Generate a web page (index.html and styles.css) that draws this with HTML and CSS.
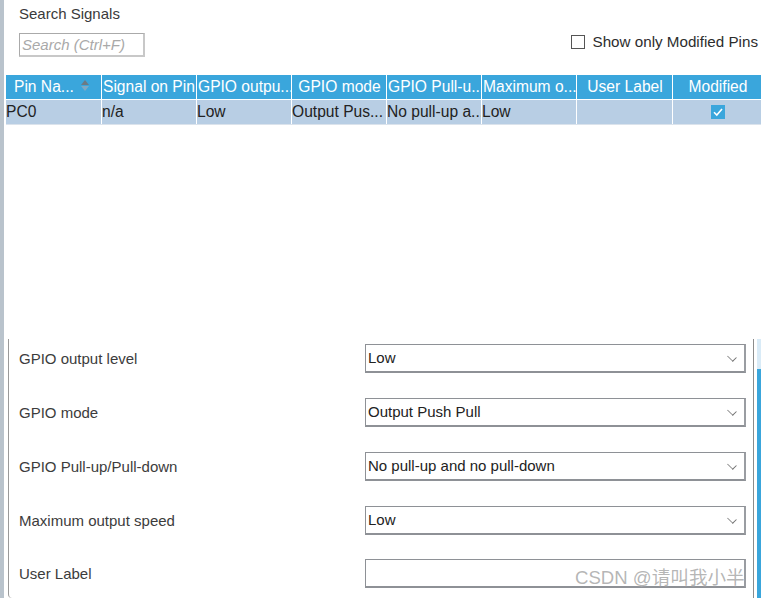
FILE: index.html
```html
<!DOCTYPE html>
<html lang="en">
<head>
    <meta charset="UTF-8">
    <meta name="viewport" content="width=device-width, initial-scale=1.0">
    <title>Pin Configuration</title>
    <link rel="stylesheet" href="styles.css">
</head>
<body>
    <div id="app">
        <div class="edge"></div>
        <div class="main">
            <div class="search-bar">
                <div class="search-left">
                    <div class="search-title">Search Signals</div>
                    <div class="search-box">Search (Ctrl+F)</div>
                </div>
                <label class="only-modified">
                    <span class="box"></span>
                    Show only Modified Pins
                </label>
            </div>

            <div class="grid header">
                <div class="hcell sortable">Pin Na...
                    <span class="sort"><span class="up"></span><span class="down"></span></span>
                </div>
                <div class="hcell">Signal on Pin</div>
                <div class="hcell">GPIO outpu...</div>
                <div class="hcell center">GPIO mode</div>
                <div class="hcell">GPIO Pull-u...</div>
                <div class="hcell">Maximum o...</div>
                <div class="hcell center">User Label</div>
                <div class="hcell center">Modified</div>
            </div>
            <div class="grid row">
                <div class="cell">PC0</div>
                <div class="cell">n/a</div>
                <div class="cell">Low</div>
                <div class="cell">Output Pus...</div>
                <div class="cell">No pull-up a...</div>
                <div class="cell">Low</div>
                <div class="cell"></div>
                <div class="cell center">
                    <span class="checked">
                        <svg width="14" height="14" viewBox="0 0 14 14"><path d="M3 7.2 L5.8 10 L11 4" fill="none" stroke="#fff" stroke-width="1.6"/></svg>
                    </span>
                </div>
            </div>

            <div class="panel-wrap">
                <div class="panel">
                    <div class="prop">
                        <div class="prop-name">GPIO output level</div>
                        <div class="select">Low<span class="chev"></span></div>
                    </div>
                    <div class="prop">
                        <div class="prop-name">GPIO mode</div>
                        <div class="select">Output Push Pull<span class="chev"></span></div>
                    </div>
                    <div class="prop">
                        <div class="prop-name">GPIO Pull-up/Pull-down</div>
                        <div class="select">No pull-up and no pull-down<span class="chev"></span></div>
                    </div>
                    <div class="prop">
                        <div class="prop-name">Maximum output speed</div>
                        <div class="select">Low<span class="chev"></span></div>
                    </div>
                    <div class="prop last">
                        <div class="prop-name">User Label</div>
                        <div class="select"></div>
                    </div>
                </div>
                <div class="vline"></div>
                <div class="scroll"><div class="thumb"></div></div>
            </div>
        </div>
    </div>
    <div class="watermark">CSDN @请叫我小半</div>
</body>
</html>
```

FILE: styles.css
```css
body {
    margin: 0;
    width: 761px;
    height: 598px;
    overflow: hidden;
    background-color: #fff;
    font-family: "Liberation Sans", Arial, sans-serif;
    font-size: 15px;
    color: #333;
    position: relative;
}

#app {
    display: flex;
    height: 598px;
}

.edge {
    width: 4px;
    flex: none;
    background-color: #b9c3cc;
}

.main {
    flex: 1;
    display: flex;
    flex-direction: column;
    padding-left: 2px;
}

/* search area */
.search-bar {
    height: 75px;
    display: flex;
    justify-content: space-between;
}

.search-left {
    padding-left: 13px;
}

.search-title {
    margin-top: 5px;
    line-height: 17px;
    color: #3a3a3a;
}

.search-box {
    margin-top: 11px;
    width: 121px;
    height: 21px;
    border-style: solid;
    border-width: 1px 2px 2px 1px;
    border-color: #aaa #c8c8c8 #c8c8c8 #aaa;
    padding-left: 2px;
    line-height: 21px;
    font-style: italic;
    color: #a9a9a9;
}

.only-modified {
    margin-top: 33px;
    display: flex;
    align-items: flex-start;
    gap: 8px;
    font-size: 15.2px;
    line-height: 18px;
    color: #2d2d2d;
    white-space: nowrap;
    margin-right: 4px;
}

.only-modified .box {
    width: 12px;
    height: 12px;
    margin-top: 2px;
    border: 1px solid #555;
    background-color: #fff;
}

/* table */
.grid {
    display: grid;
    grid-template-columns: 95px 94px 94px 94px 94px 94px 95px 1fr;
    column-gap: 1px;
    background-color: #fff;
}

.header {
    height: 24px;
}

.hcell {
    background-color: #3aa6dc;
    color: #fff;
    font-size: 15.6px;
    line-height: 24px;
    white-space: nowrap;
    overflow: hidden;
    padding-left: 1px;
}

.hcell.sortable {
    padding-left: 8px;
    position: relative;
}

.center {
    text-align: center;
}

.sort {
    position: absolute;
    left: 75px;
    top: 5px;
}

.sort .up,
.sort .down {
    display: block;
    width: 0;
    height: 0;
    border-left: 4px solid transparent;
    border-right: 4px solid transparent;
}

.sort .up {
    border-bottom: 5px solid #6d7a84;
}

.sort .down {
    margin-top: 1px;
    border-top: 5px solid #7fa9c4;
}

.row {
    margin-top: 1px;
    height: 24px;
    border-bottom: 1px solid #dbe3ec;
}

.cell {
    background-color: #b8cee4;
    line-height: 24px;
    color: #222;
    font-size: 15.6px;
    white-space: nowrap;
    overflow: hidden;
}

.checked {
    display: inline-block;
    width: 14px;
    height: 14px;
    margin-top: 5px;
    vertical-align: top;
    background-color: #3aa6dc;
}

.checked svg {
    display: block;
}

/* properties panel */
.panel-wrap {
    margin-top: auto;
    height: 259px;
    display: flex;
}

.panel {
    flex: 1;
    margin-left: 2px;
    border-left: 1px solid #9a9a9a;
    border-bottom-left-radius: 4px;
    padding-top: 5px;
}

.prop {
    display: flex;
    align-items: center;
    height: 28px;
    margin-bottom: 26px;
}

.prop.last {
    margin-top: -1px;
}

.prop-name {
    width: 346px;
    padding-left: 10px;
    color: #3c3c3c;
}

.select {
    width: 376px;
    height: 26px;
    border-style: solid;
    border-width: 1px 2px 2px 1px;
    border-color: #8e9196 #9a9da2 #8e9196 #8e9196;
    padding-left: 2px;
    line-height: 26px;
    color: #222;
    position: relative;
}

.chev {
    position: absolute;
    right: 8px;
    top: 8px;
    width: 7px;
    height: 7px;
    border-right: 1.5px solid #6f6f6f;
    border-bottom: 1.5px solid #6f6f6f;
    transform: rotate(45deg) scaleY(0.7);
}

.vline {
    width: 1px;
    margin-left: 7px;
    background-color: #8c8c8c;
}

.scroll {
    width: 5px;
    margin-left: 3px;
    background-color: #d9ebf7;
}

.scroll .thumb {
    margin-top: 30px;
    height: 229px;
    background-color: #3aa6dc;
}

.watermark {
    position: absolute;
    left: 575px;
    top: 566px;
    font-size: 18.6px;
    line-height: 24px;
    color: rgba(150, 150, 150, 0.7);
    font-family: "Liberation Sans", "Noto Sans CJK SC", sans-serif;
    text-shadow: 0 0 1px #fff;
    white-space: nowrap;
}
```
